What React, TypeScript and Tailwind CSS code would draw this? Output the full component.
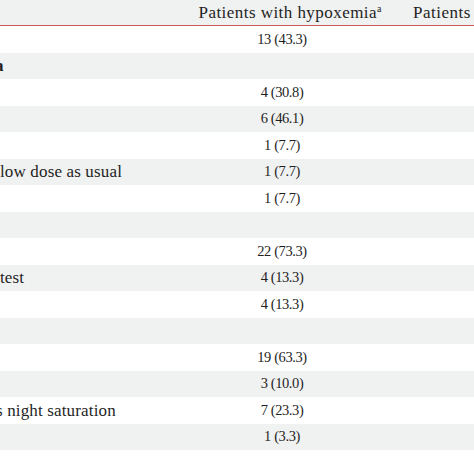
const rows: { label?: React.ReactNode; value?: string; shaded: boolean }[] = [
  { value: '13 (43.3)', shaded: false },
  { label: <span className="-ml-[5px] font-bold">a</span>, shaded: true },
  { value: '4 (30.8)', shaded: false },
  { value: '6 (46.1)', shaded: true },
  { value: '1 (7.7)', shaded: false },
  { label: 'low dose as usual', value: '1 (7.7)', shaded: true },
  { value: '1 (7.7)', shaded: false },
  { shaded: true },
  { value: '22 (73.3)', shaded: false },
  { label: 'test', value: '4 (13.3)', shaded: true },
  { value: '4 (13.3)', shaded: false },
  { shaded: true },
  { value: '19 (63.3)', shaded: false },
  { value: '3 (10.0)', shaded: true },
  { label: <span className="-ml-[4px]">s night saturation</span>, value: '7 (23.3)', shaded: false },
  { value: '1 (3.3)', shaded: true },
]

export default function App() {
  return (
    <div className="w-[474px] h-[474px] overflow-hidden bg-white font-['Liberation_Serif','Times_New_Roman',serif] text-[17px] text-[#1f1f1f] whitespace-nowrap">
      {/* Header */}
      <div className="flex items-center h-[26px] bg-[#f0f1f1] border-b-[1.5px] border-[#c65a5c]">
        <div className="w-[190px] shrink-0" />
        <div className="w-[200px] shrink-0 text-center tracking-[0.45px]">
          Patients with hypoxemia
          <span className="relative -top-[6px] text-[10px] tracking-normal">a</span>
        </div>
        <div className="pl-[23px] tracking-[0.5px]">Patients</div>
      </div>

      {/* Body */}
      {rows.map((row, i) => (
        <div
          key={i}
          className={`flex items-center h-[26.5px] ${row.shaded ? 'bg-[#f0f1f1]' : 'bg-white'}`}
        >
          <div className="w-[190px] shrink-0 overflow-hidden tracking-[0.15px]">{row.label}</div>
          <div className="w-[200px] shrink-0 text-center pr-[16px] text-[14.5px] tracking-[-0.4px] pt-[1px]">
            {row.value}
          </div>
          <div className="flex-1" />
        </div>
      ))}
    </div>
  )
}
